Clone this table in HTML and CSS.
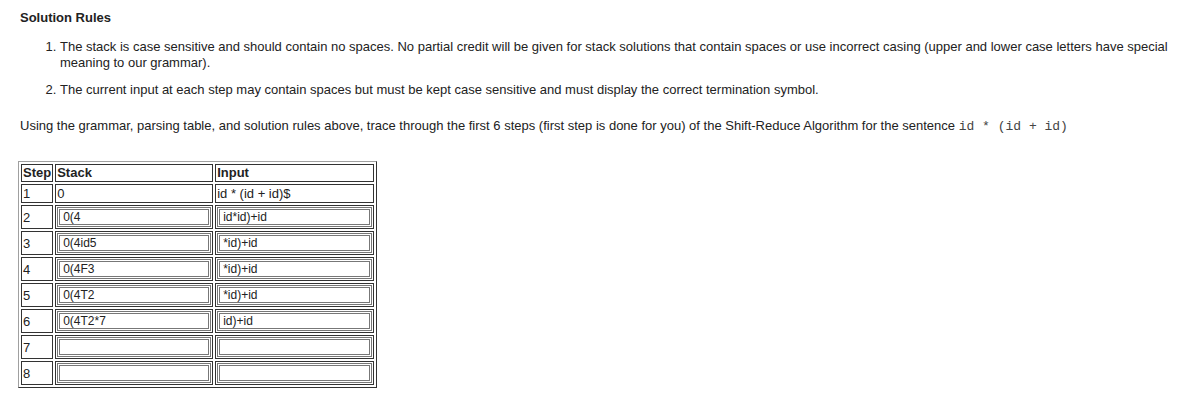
FILE: index.html
```html
<!DOCTYPE html>
<html>
<head>
<meta charset="utf-8">
<link rel="stylesheet" href="styles.css">
</head>
<body>
<div class="page">
  <div class="title">Solution Rules</div>
  <ol class="rules">
    <li>The stack is case sensitive and should contain no spaces. No partial credit will be given for stack solutions that contain spaces or use incorrect casing (upper and lower case letters have special meaning to our grammar).</li>
    <li>The current input at each step may contain spaces but must be kept case sensitive and must display the correct termination symbol.</li>
  </ol>
  <p class="intro">Using the grammar, parsing table, and solution rules above, trace through the first 6 steps (first step is done for you) of the Shift-Reduce Algorithm for the sentence <code>id * (id + id)</code></p>
  <table class="trace">
    <tr class="head"><td>Step</td><td>Stack</td><td>Input</td></tr>
    <tr><td>1</td><td>0</td><td>id * (id + id)$</td></tr>
    <tr><td>2</td><td><input class="stack" type="text" value="0(4"></td><td><input class="inp" type="text" value="id*id)+id"></td></tr>
    <tr><td>3</td><td><input class="stack" type="text" value="0(4id5"></td><td><input class="inp" type="text" value="*id)+id"></td></tr>
    <tr><td>4</td><td><input class="stack" type="text" value="0(4F3"></td><td><input class="inp" type="text" value="*id)+id"></td></tr>
    <tr><td>5</td><td><input class="stack" type="text" value="0(4T2"></td><td><input class="inp" type="text" value="*id)+id"></td></tr>
    <tr><td>6</td><td><input class="stack" type="text" value="0(4T2*7"></td><td><input class="inp" type="text" value="id)+id"></td></tr>
    <tr><td>7</td><td><input class="stack" type="text" value=""></td><td><input class="inp" type="text" value=""></td></tr>
    <tr><td>8</td><td><input class="stack" type="text" value=""></td><td><input class="inp" type="text" value=""></td></tr>
  </table>
</div>
</body>
</html>
```
FILE: styles.css
```css
html, body {
  margin: 0;
  padding: 0;
  background: #fff;
}
body {
  font-family: "Liberation Sans", Arial, sans-serif;
  font-size: 13px;
  line-height: 16px;
  color: #222;
}
.page {
  padding: 10px 0 0 20px;
}
.title {
  font-weight: bold;
}
.rules {
  margin: 13px 0 0 0;
  padding-left: 40px;
}
.rules li {
  margin-bottom: 11px;
}
.intro {
  margin: 20px 0 26px 0;
}
code {
  font-family: "Liberation Mono", "Courier New", monospace;
  font-size: 13px;
  color: #444;
}
.trace {
  margin-left: -2px;
  border-collapse: separate;
  border-spacing: 2px;
  border: 1px solid;
  border-color: #a0a0a0 #333 #333 #a0a0a0;
  line-height: 15px;
}
.trace td {
  border: 1px solid #333;
  padding: 1px;
  vertical-align: middle;
}
.trace .head td {
  font-weight: bold;
  line-height: 14px;
}
.trace input {
  box-sizing: border-box;
  height: 20px;
  border: 3px double #777;
  padding: 0 3px;
  margin: 0;
  font-family: "Liberation Sans", Arial, sans-serif;
  font-size: 12px;
  color: #222;
  display: block;
  outline: none;
  background: #fff;
}
.trace input.stack {
  width: 154px;
}
.trace input.inp {
  width: 155px;
}
```
